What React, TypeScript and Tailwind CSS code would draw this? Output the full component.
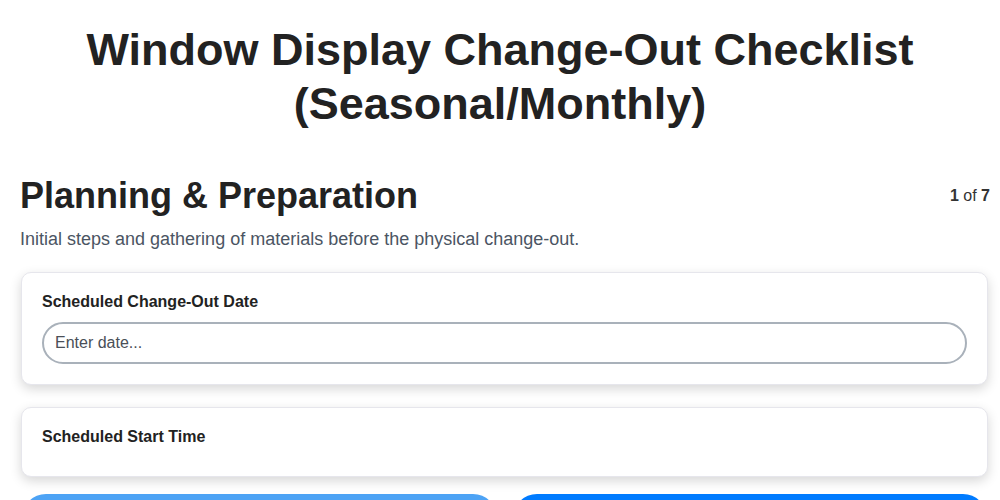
import React from 'react'

const font = { fontFamily: '"Liberation Sans", Arial, sans-serif' }

const Field: React.FC<{ label: string; placeholder?: string }> = ({ label, placeholder }) => (
  <div
    className={`bg-white rounded-[10px] border border-[#e6e6ec] shadow-[0_4px_12px_rgba(0,0,0,0.16)] px-[20px] pt-[19px] ${
      placeholder ? 'pb-[20px]' : 'pb-[19px]'
    }`}
  >
    <label className="block text-[16px] font-bold text-[#222] leading-[20px] mb-[10px]">{label}</label>
    {placeholder && (
      <input
        className="w-full h-[42px] rounded-full border-2 border-[#a9b1ba] px-[11px] text-[16px] text-[#333] placeholder:text-[#4a4f57] outline-none"
        placeholder={placeholder}
      />
    )}
  </div>
)

export default function App() {
  return (
    <div style={font} className="min-h-screen bg-white text-[#222]">
      <h1 className="text-center text-[45px] font-bold leading-[54px] pt-[23px] text-[#222]">
        Window Display Change-Out Checklist
        <br />
        (Seasonal/Monthly)
      </h1>

      <div className="pl-[20px] pr-[12px]">
        <div className="mt-[43px] flex items-start justify-between">
          <h2 className="text-[36px] font-bold leading-[44px] text-[#222]">Planning &amp; Preparation</h2>
          <div className="text-[16px] text-[#333] mt-[10px] -mr-[2px]">
            <span className="font-bold">1</span> of <span className="font-bold">7</span>
          </div>
        </div>
        <p className="text-[18px] leading-[22px] text-[#4b5563] mt-[10px]">
          Initial steps and gathering of materials before the physical change-out.
        </p>

        <div className="mt-[22px] flex flex-col gap-[22px] pl-px">
          <Field label="Scheduled Change-Out Date" placeholder="Enter date..." />
          <Field label="Scheduled Start Time" />
        </div>

        <div className="mt-[17px] flex gap-[16px] pl-[2px] pr-px">
          <button className="flex-1 h-[48px] rounded-full bg-[#4da3f5] text-white text-[16px] font-bold">Previous</button>
          <button className="flex-1 h-[48px] rounded-full bg-[#007bff] text-white text-[16px] font-bold">Next</button>
        </div>
      </div>
    </div>
  )
}
